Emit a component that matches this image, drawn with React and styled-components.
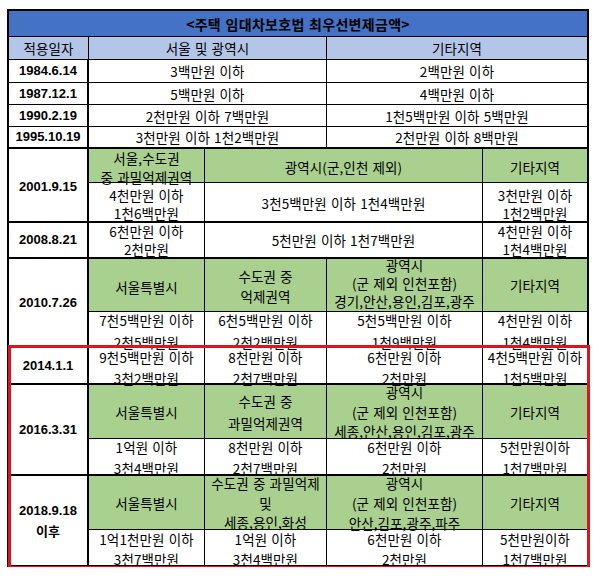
import React from 'react'
import styled, { createGlobalStyle } from 'styled-components'

const GlobalStyle = createGlobalStyle`
  body {
    margin: 0;
    background: #ffffff;
  }
`

const fills = {
  title: '#4472c4',
  head: '#b4c6e7',
  green: '#a9d08e',
}

const Page = styled.div`
  padding: 9px 0 0 7px;
  font-family: "Noto Sans CJK KR", "Noto Sans", sans-serif;
  font-size: 13.5px;
  letter-spacing: 0.1px;
  word-spacing: 1px;
  color: #000;
`

const Frame = styled.div`
  position: relative;
  width: 582px;
`

const Table = styled.table`
  width: 582px;
  border-collapse: separate;
  border-spacing: 0;
  table-layout: fixed;
  border: 2px solid #000;
`

const Col = styled.col`
  width: ${p => p.$w}px;
`

// a row that opens a new date group gets a doubled line above it
const Row = styled.tr`
  & > td {
    border-top: ${p => (p.$group ? '1px solid #000' : '0')};
    border-bottom: ${p => (p.$end ? '0' : '1px solid #000')};
  }
`

const Td = styled.td`
  padding: 0;
  border-right: 1px solid #000;
  background: ${p => fills[p.$fill] || '#ffffff'};
  text-align: center;
  vertical-align: middle;
  white-space: nowrap;

  &:last-child {
    border-right: 0;
  }
`

const DateTd = styled(Td)`
  && {
    border-right: 2px solid #000;
    border-bottom: ${p => (p.$end ? '0' : '1px solid #000')};
  }
  padding-top: ${p => p.$shift || 0}px;
  font-family: "Liberation Sans", "Noto Sans CJK KR", sans-serif;
  font-size: 13px;
  font-weight: 700;
  letter-spacing: 0;
  line-height: 20px;
`

const Box = styled.div`
  height: ${p => p.$h}px;
  padding-top: ${p => Math.max(0, 2 * p.$off)}px;
  padding-bottom: ${p => Math.max(0, -2 * p.$off)}px;
  box-sizing: border-box;
  display: flex;
  flex-direction: column;
  justify-content: center;
  align-items: center;
  gap: ${p => p.$pitch - 14}px;
  line-height: 14px;
`

const TitleText = styled.span`
  font-size: 14px;
  font-weight: 700;
  letter-spacing: 0.3px;
`

const Korean = styled.span`
  font-family: "Noto Sans CJK KR", sans-serif;
`

const Highlight = styled.div`
  position: absolute;
  left: 1px;
  top: 336px;
  width: 582px;
  height: 224px;
  box-sizing: border-box;
  border: 3px solid #e0141c;
  pointer-events: none;
`

const Cell = ({ lines, h, pitch = 20, off = 0, fill, span }) => (
  <Td colSpan={span} $fill={fill}>
    <Box $h={h} $pitch={pitch} $off={off}>
      {lines.map((l, i) => (
        <span key={i}>{l}</span>
      ))}
    </Box>
  </Td>
)

const early = [
  ['1984.6.14', '3백만원 이하', '2백만원 이하', 22],
  ['1987.12.1', '5백만원 이하', '4백만원 이하', 21],
  ['1990.2.19', '2천만원 이하 7백만원', '1천5백만원 이하 5백만원', 21],
  ['1995.10.19', '3천만원 이하 1천2백만원', '2천만원 이하 8백만원', 20],
]

const App = () => {
  return (
    <Page>
      <GlobalStyle />
      <Frame>
        <Table>
          <colgroup>
            <Col $w={80} />
            <Col $w={116} />
            <Col $w={122} />
            <Col $w={156} />
            <Col $w={104} />
          </colgroup>
          <tbody>
            <Row>
              <Cell fill="title" span={5} h={25} off={0.5} lines={[<TitleText key="t">&lt;주택 임대차보호법 최우선변제금액&gt;</TitleText>]} />
            </Row>
            <Row>
              <Cell fill="head" lines={['적용일자']} h={22} />
              <Cell fill="head" span={2} lines={['서울 및 광역시']} h={22} />
              <Cell fill="head" span={2} lines={['기타지역']} h={22} />
            </Row>
            {early.map(([date, seoul, etc, h]) => (
              <Row key={date}>
                <DateTd>{date}</DateTd>
                <Cell span={2} lines={[seoul]} h={h} />
                <Cell span={2} lines={[etc]} h={h} />
              </Row>
            ))}

            <Row $group>
              <DateTd rowSpan={2} $shift={3}>2001.9.15</DateTd>
              <Cell fill="green" lines={['서울,수도권', '중 과밀억제권역']} h={33} pitch={19} off={2} />
              <Cell fill="green" span={2} lines={['광역시(군,인천 제외)']} h={33} off={1} />
              <Cell fill="green" lines={['기타지역']} h={33} off={1} />
            </Row>
            <Row>
              <Cell lines={['4천만원 이하', '1천6백만원']} h={38} pitch={18} off={1.5} />
              <Cell span={2} lines={['3천5백만원 이하 1천4백만원']} h={38} off={1} />
              <Cell lines={['3천만원 이하', '1천2백만원']} h={38} pitch={18} off={1.5} />
            </Row>

            <Row $group>
              <DateTd>2008.8.21</DateTd>
              <Cell lines={['6천만원 이하', '2천만원']} h={34} pitch={18} />
              <Cell span={2} lines={['5천만원 이하 1천7백만원']} h={34} />
              <Cell lines={['4천만원 이하', '1천4백만원']} h={34} pitch={18} />
            </Row>

            <Row $group>
              <DateTd rowSpan={2}>2010.7.26</DateTd>
              <Cell fill="green" lines={['서울특별시']} h={52} off={1.5} />
              <Cell fill="green" lines={['수도권 중', '억제권역']} h={52} pitch={20} off={1} />
              <Cell fill="green" lines={['광역시', '(군 제외 인천포함)', '경기,안산,용인,김포,광주']} h={52} pitch={18} off={-2.5} />
              <Cell fill="green" lines={['기타지역']} h={52} />
            </Row>
            <Row>
              <Cell lines={['7천5백만원 이하', '2천5백만원']} h={34} pitch={22} off={1.5} />
              <Cell lines={['6천5백만원 이하', '2천2백만원']} h={34} pitch={22} off={1.5} />
              <Cell lines={['5천5백만원 이하', '1천9백만원']} h={34} pitch={22} off={1.5} />
              <Cell lines={['4천만원 이하', '1천4백만원']} h={34} pitch={22} off={1.5} />
            </Row>

            <Row $group>
              <DateTd>2014.1.1</DateTd>
              <Cell lines={['9천5백만원 이하', '3천2백만원']} h={35} pitch={20.5} off={2} />
              <Cell lines={['8천만원 이하', '2천7백만원']} h={35} pitch={20.5} off={2} />
              <Cell lines={['6천만원 이하', '2천만원']} h={35} pitch={20.5} off={2} />
              <Cell lines={['4천5백만원 이하', '1천5백만원']} h={35} pitch={20.5} off={2} />
            </Row>

            <Row $group>
              <DateTd rowSpan={2}>2016.3.31</DateTd>
              <Cell fill="green" lines={['서울특별시']} h={53} />
              <Cell fill="green" lines={['수도권 중', '과밀억제권역']} h={53} pitch={22} />
              <Cell fill="green" lines={['광역시', '(군 제외 인천포함)', '세종,안산,용인,김포,광주']} h={53} pitch={19.5} />
              <Cell fill="green" lines={['기타지역']} h={53} />
            </Row>
            <Row>
              <Cell lines={['1억원 이하', '3천4백만원']} h={35} pitch={21} off={0.5} />
              <Cell lines={['8천만원 이하', '2천7백만원']} h={35} pitch={21} off={0.5} />
              <Cell lines={['6천만원 이하', '2천만원']} h={35} pitch={21} off={0.5} />
              <Cell lines={['5천만원이하', '1천7백만원']} h={35} pitch={21} off={0.5} />
            </Row>

            <Row $group>
              <DateTd rowSpan={2} $end $shift={2}>
                2018.9.18
                <br />
                <Korean>이후</Korean>
              </DateTd>
              <Cell fill="green" lines={['서울특별시']} h={53} />
              <Cell fill="green" lines={['수도권 중 과밀억제', '및', '세종,용인,화성']} h={53} pitch={19.5} />
              <Cell fill="green" lines={['광역시', '(군 제외 인천포함)', '안산,김포,광주,파주']} h={53} pitch={20} />
              <Cell fill="green" lines={['기타지역']} h={53} />
            </Row>
            <Row $end>
              <Cell lines={['1억1천만원 이하', '3천7백만원']} h={35} pitch={20} off={1} />
              <Cell lines={['1억원 이하', '3천4백만원']} h={35} pitch={20} off={1} />
              <Cell lines={['6천만원 이하', '2천만원']} h={35} pitch={20} off={1} />
              <Cell lines={['5천만원이하', '1천7백만원']} h={35} pitch={20} off={1} />
            </Row>
          </tbody>
        </Table>
        <Highlight />
      </Frame>
    </Page>
  )
}

export default App
